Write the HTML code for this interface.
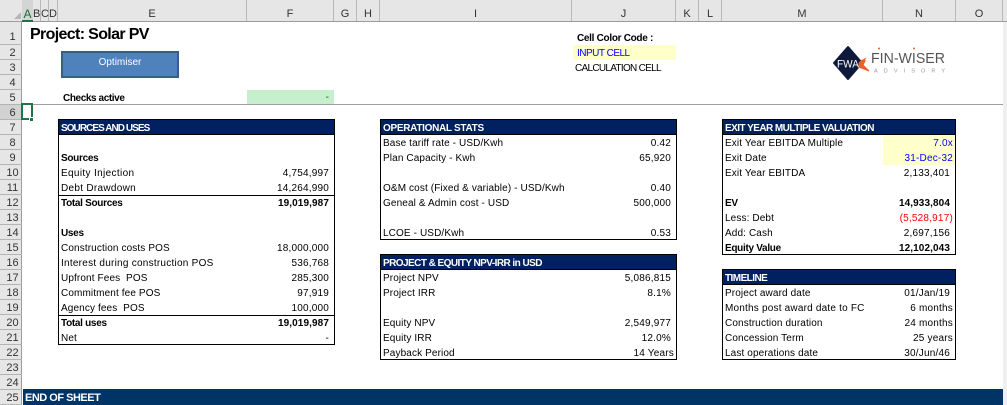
<!DOCTYPE html>
<html><head><meta charset="utf-8"><title>Project: Solar PV</title>
<style>
html,body{margin:0;padding:0;background:#fff}
#s{position:relative;width:1007px;height:405px;overflow:hidden;background:#fff;font-family:"Liberation Sans",sans-serif;font-size:10px;color:#000}
#s div{box-sizing:border-box}
.a{position:absolute;white-space:nowrap}
.ch{position:absolute;top:0;height:21px;line-height:29px;text-align:center;font-size:11px;color:#333;border-right:1px solid #b8b8b8}
.rh{position:absolute;left:0;width:22px;height:15px;line-height:17px;text-align:center;font-size:11px;color:#333;border-bottom:1px solid #b4b4b4;padding-left:3px}
.box{position:absolute;border:1px solid #000;background:#fff}
.hd{height:15px;background:#002060;color:#fff;font-weight:bold;line-height:17px;padding-left:2px;border-bottom:1px solid #000;white-space:nowrap;letter-spacing:-.55px}
.row{position:relative;height:15px;line-height:17px;padding-left:2px;white-space:nowrap;letter-spacing:.12px}
.row i{font-style:normal;position:absolute;top:0;right:5px;letter-spacing:.2px}
.row.x i{right:2px}
.b{font-weight:bold;letter-spacing:-.3px}
.row.b{letter-spacing:-.3px}
.row.b i{letter-spacing:.1px}
.t{border-top:1px solid #000;line-height:15px}
.red{color:#f00}.blue{color:#00f}
</style></head><body><div id="s">
<div class="a" style="left:0;top:0;width:1007px;height:22px;background:#e6e6e6;border-bottom:1px solid #9c9c9c"></div>
<div class="a" style="left:0;top:22px;width:22px;height:383px;background:#e6e6e6;border-right:1px solid #9c9c9c"></div>
<div class="a" style="left:1003px;top:22px;width:4px;height:383px;background:#efefef"></div>
<svg class="a" style="left:14px;top:12px" width="7" height="7"><path d="M7 0V7H0Z" fill="#b5b5b5"/></svg>

<div class="ch" style="left:22px;width:11px;color:#1d6b3c;font-size:12px;border:0;height:22px;background:#d4d4d4;border-bottom:2px solid #217346">A</div>
<div class="ch" style="left:33px;width:8px">B</div>
<div class="ch" style="left:41px;width:8px">C</div>
<div class="ch" style="left:49px;width:9px">D</div>
<div class="ch" style="left:58px;width:189px">E</div>
<div class="ch" style="left:247px;width:87px">F</div>
<div class="ch" style="left:334px;width:23px">G</div>
<div class="ch" style="left:357px;width:23px">H</div>
<div class="ch" style="left:380px;width:192px">I</div>
<div class="ch" style="left:572px;width:104px">J</div>
<div class="ch" style="left:676px;width:23px">K</div>
<div class="ch" style="left:699px;width:23px">L</div>
<div class="ch" style="left:722px;width:161px">M</div>
<div class="ch" style="left:883px;width:73px">N</div>
<div class="ch" style="left:956px;width:47px">O</div>

<div class="rh" style="top:22px;height:23px;line-height:30px">1</div>
<div class="rh" style="top:45px">2</div>
<div class="rh" style="top:60px">3</div>
<div class="rh" style="top:75px">4</div>
<div class="rh" style="top:90px">5</div>
<div class="rh" style="top:105px;background:#d2d2d2">6</div>
<div class="rh" style="top:120px">7</div>
<div class="rh" style="top:135px">8</div>
<div class="rh" style="top:150px">9</div>
<div class="rh" style="top:165px">10</div>
<div class="rh" style="top:180px">11</div>
<div class="rh" style="top:195px">12</div>
<div class="rh" style="top:210px">13</div>
<div class="rh" style="top:225px">14</div>
<div class="rh" style="top:240px">15</div>
<div class="rh" style="top:255px">16</div>
<div class="rh" style="top:270px">17</div>
<div class="rh" style="top:285px">18</div>
<div class="rh" style="top:300px">19</div>
<div class="rh" style="top:315px">20</div>
<div class="rh" style="top:330px">21</div>
<div class="rh" style="top:345px">22</div>
<div class="rh" style="top:360px">23</div>
<div class="rh" style="top:375px">24</div>
<div class="rh" style="top:390px">25</div>

<div class="a" style="left:30px;top:25px;font-size:16px;font-weight:bold;line-height:20px;letter-spacing:-.65px">Project: Solar PV</div>
<div class="a" style="left:61px;top:51px;width:118px;height:27px;background:#4f81bd;border:2px solid #385d8a;color:#fff;text-align:center;line-height:20px">Optimiser</div>
<div class="a b" style="left:63px;top:90px;line-height:17px;letter-spacing:-.4px">Checks active</div>
<div class="a" style="left:247px;top:90px;width:87px;height:14px;background:#c6efce;color:#006100;text-align:right;padding-right:5px;line-height:16px">-</div>
<div class="a" style="left:22px;top:104px;width:981px;height:1px;background:#a0a0a0"></div>
<div class="a" style="left:21px;top:103px;width:12px;height:17px;border:2px solid #217346"></div>
<div class="a" style="left:29px;top:117px;width:5px;height:5px;background:#217346;border:1px solid #fff"></div>

<div class="a b" style="left:577px;top:30px;line-height:17px;letter-spacing:-.3px">Cell Color Code :</div>
<div class="a blue" style="left:573px;top:45px;width:103px;height:15px;background:#ffffcc;padding-left:4px;line-height:17px;letter-spacing:-.5px">INPUT CELL</div>
<div class="a" style="left:575px;top:60px;letter-spacing:-.7px;line-height:17px">CALCULATION CELL</div>

<svg class="a" style="left:830px;top:42px" width="120" height="40" viewBox="0 0 120 40">
<path d="M18 5L32 21 18 37 4 21Z" fill="#0e1a3c" stroke="#0e1a3c" stroke-width="2" stroke-linejoin="round"/>
<path d="M29 21c3-4 7-4 6-2l-2 4 6 6-5-2-5-2zM31 20l5-4" fill="#e8622c" stroke="#e8622c"/>
<text x="7" y="25.500" font-family="Liberation Sans" font-size="11" fill="#fff" textLength="22" lengthAdjust="spacingAndGlyphs">FWA</text>
<text x="41" y="21" font-family="Liberation Sans" font-size="15" fill="#555" textLength="74" lengthAdjust="spacingAndGlyphs">FIN-WISER</text>
<text x="44" y="30.500" font-family="Liberation Sans" font-size="5.500" fill="#999" textLength="71" lengthAdjust="spacing">ADVISORY</text>
<circle cx="49" cy="6.500" r="1" fill="#e8622c"/><circle cx="84" cy="6.500" r="1" fill="#e8622c"/>
</svg>

<div class="box" style="left:58px;top:119px;width:277px;height:226px">
<div class="hd" style="letter-spacing:-.95px">SOURCES AND USES</div>
<div class="row"></div>
<div class="row b">Sources</div>
<div class="row" style="letter-spacing:.35px">Equity Injection<i>4,754,997</i></div>
<div class="row" style="letter-spacing:.3px">Debt Drawdown<i>14,264,990</i></div>
<div class="row b t">Total Sources<i>19,019,987</i></div>
<div class="row"></div>
<div class="row b">Uses</div>
<div class="row">Construction costs POS<i>18,000,000</i></div>
<div class="row" style="letter-spacing:.25px">Interest during construction POS<i>536,768</i></div>
<div class="row">Upfront Fees&nbsp; POS<i>285,300</i></div>
<div class="row">Commitment fee POS<i>97,919</i></div>
<div class="row">Agency fees&nbsp; POS<i>100,000</i></div>
<div class="row b t">Total uses<i>19,019,987</i></div>
<div class="row">Net<i>-</i></div>
</div>

<div class="box" style="left:380px;top:119px;width:297px;height:121px">
<div class="hd" style="letter-spacing:-.3px">OPERATIONAL STATS</div>
<div class="row">Base tariff rate - USD/Kwh<i>0.42</i></div>
<div class="row">Plan Capacity - Kwh<i>65,920</i></div>
<div class="row"></div>
<div class="row">O&amp;M cost (Fixed &amp; variable) - USD/Kwh<i>0.40</i></div>
<div class="row">Geneal &amp; Admin cost - USD<i>500,000</i></div>
<div class="row"></div>
<div class="row">LCOE - USD/Kwh<i>0.53</i></div>
</div>

<div class="box" style="left:380px;top:254px;width:297px;height:106px">
<div class="hd">PROJECT &amp; EQUITY NPV-IRR in USD</div>
<div class="row">Project NPV<i>5,086,815</i></div>
<div class="row">Project IRR<i>8.1%</i></div>
<div class="row"></div>
<div class="row">Equity NPV<i>2,549,977</i></div>
<div class="row">Equity IRR<i>12.0%</i></div>
<div class="row x">Payback Period<i>14 Years</i></div>
</div>

<div class="a" style="left:883px;top:135px;width:72px;height:30px;background:#ffffcc;z-index:1"></div>
<div class="box" style="left:722px;top:119px;width:234px;height:136px">
<div class="hd">EXIT YEAR MULTIPLE VALUATION</div>
<div class="row" style="z-index:2">Exit Year EBITDA Multiple<i class="blue" style="right:2px">7.0x</i></div>
<div class="row" style="z-index:2">Exit Date<i class="blue" style="right:2px">31-Dec-32</i></div>
<div class="row">Exit Year EBITDA<i>2,133,401</i></div>
<div class="row"></div>
<div class="row b">EV<i>14,933,804</i></div>
<div class="row">Less: Debt<i class="red" style="right:2px">(5,528,917)</i></div>
<div class="row">Add: Cash<i>2,697,156</i></div>
<div class="row b">Equity Value<i>12,102,043</i></div>
</div>

<div class="box" style="left:722px;top:269px;width:234px;height:91px">
<div class="hd">TIMELINE</div>
<div class="row">Project award date<i>01/Jan/19</i></div>
<div class="row x" style="letter-spacing:.2px">Months post award date to FC<i>6 months</i></div>
<div class="row x">Construction duration<i>24 months</i></div>
<div class="row x">Concession Term<i>25 years</i></div>
<div class="row">Last operations date<i>30/Jun/46</i></div>
</div>

<div class="a b" style="left:23px;top:389px;width:980px;height:16px;background:#003366;color:#fff;padding-left:2px;line-height:18px;font-size:11px;letter-spacing:-.5px">END OF SHEET</div>
</div></body></html>
